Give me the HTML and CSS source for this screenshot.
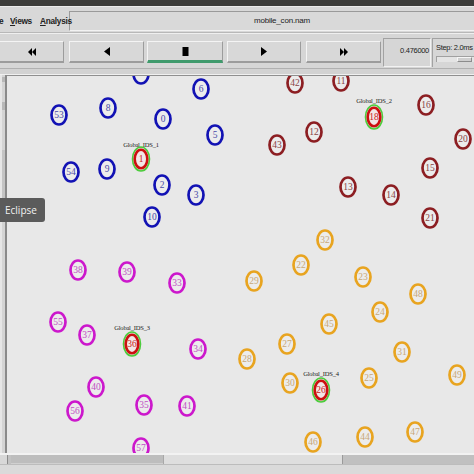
FILE: index.html
```html
<!DOCTYPE html>
<html>
<head>
<meta charset="utf-8">
<link rel="stylesheet" href="styles.css">
</head>
<body>
<div class="app">
  <div class="titlebar"></div>
  <div class="menubar">
    <div class="menus">
      <span class="menu">e</span>
      <span class="menu"><u>V</u>iews</span>
      <span class="menu"><u>A</u>nalysis</span>
    </div>
    <div class="filefield">mobile_con.nam</div>
  </div>
  <div class="toolbar">
    <div class="btn b1"><svg width="10" height="8" viewBox="0 0 10 8"><polygon points="5,0 5,8 1,4" fill="#000"/><polygon points="9,0 9,8 5,4" fill="#000"/></svg></div>
    <div class="btn b2"><svg width="8" height="9" viewBox="0 0 8 9"><polygon points="7,0 7,9 1,4.5" fill="#000"/></svg></div>
    <div class="btn b3 active"><svg width="7" height="9" viewBox="0 0 7 9"><rect x="0.5" y="0" width="6" height="9" fill="#000"/></svg></div>
    <div class="btn b4"><svg width="8" height="9" viewBox="0 0 8 9"><polygon points="1,0 1,9 7,4.5" fill="#000"/></svg></div>
    <div class="btn b5"><svg width="10" height="8" viewBox="0 0 10 8"><polygon points="1,0 1,8 5,4" fill="#000"/><polygon points="5,0 5,8 9,4" fill="#000"/></svg></div>
    <div class="timebox">0.476000</div>
    <div class="stepbox">
      <div class="steplabel">Step: 2.0ms</div>
      <div class="slider"><div class="thumb"></div></div>
    </div>
  </div>
  <div class="sep"></div>
  <div class="main">
    <div class="leftstrip">
      <div class="ls-knob k1"></div>
      <div class="ls-knob k2"></div>
      <div class="ls-bar"></div>
    </div>
    <div class="canvas">
      <svg class="net" width="466" height="378" viewBox="8 75 466 378">
        <g class="blue">
          <ellipse cx="142" cy="73" rx="7.5" ry="9.5"/>
          <ellipse cx="60" cy="114" rx="7.5" ry="9.5"/><text x="60" y="114">53</text>
          <ellipse cx="109" cy="107" rx="7.5" ry="9.5"/><text x="109" y="107">8</text>
          <ellipse cx="164" cy="118" rx="7.5" ry="9.5"/><text x="164" y="118">0</text>
          <ellipse cx="202" cy="88" rx="7.5" ry="9.5"/><text x="202" y="88">6</text>
          <ellipse cx="216" cy="134" rx="7.5" ry="9.5"/><text x="216" y="134">5</text>
          <ellipse cx="108" cy="168" rx="7.5" ry="9.5"/><text x="108" y="168">9</text>
          <ellipse cx="72" cy="171" rx="7.5" ry="9.5"/><text x="72" y="171">54</text>
          <ellipse cx="163" cy="184" rx="7.5" ry="9.5"/><text x="163" y="184">2</text>
          <ellipse cx="197" cy="194" rx="7.5" ry="9.5"/><text x="197" y="194">3</text>
          <ellipse cx="153" cy="216" rx="7.5" ry="9.5"/><text x="153" y="216">10</text>
        </g>
        <g class="red">
          <ellipse cx="296" cy="82" rx="7.5" ry="9.5"/><text x="296" y="82">42</text>
          <ellipse cx="342" cy="80" rx="7.5" ry="9.5"/><text x="342" y="80">11</text>
          <ellipse cx="315" cy="131" rx="7.5" ry="9.5"/><text x="315" y="131">12</text>
          <ellipse cx="278" cy="144" rx="7.5" ry="9.5"/><text x="278" y="144">43</text>
          <ellipse cx="427" cy="104" rx="7.5" ry="9.5"/><text x="427" y="104">16</text>
          <ellipse cx="464" cy="138" rx="7.5" ry="9.5"/><text x="464" y="138">20</text>
          <ellipse cx="431" cy="167" rx="7.5" ry="9.5"/><text x="431" y="167">15</text>
          <ellipse cx="349" cy="186" rx="7.5" ry="9.5"/><text x="349" y="186">13</text>
          <ellipse cx="392" cy="194" rx="7.5" ry="9.5"/><text x="392" y="194">14</text>
          <ellipse cx="431" cy="217" rx="7.5" ry="9.5"/><text x="431" y="217">21</text>
        </g>
        <g class="mag">
          <ellipse cx="79" cy="269" rx="7.5" ry="9.5"/><text x="79" y="269">38</text>
          <ellipse cx="128" cy="271" rx="7.5" ry="9.5"/><text x="128" y="271">39</text>
          <ellipse cx="178" cy="282" rx="7.5" ry="9.5"/><text x="178" y="282">33</text>
          <ellipse cx="59" cy="321" rx="7.5" ry="9.5"/><text x="59" y="321">55</text>
          <ellipse cx="88" cy="334" rx="7.5" ry="9.5"/><text x="88" y="334">37</text>
          <ellipse cx="199" cy="348" rx="7.5" ry="9.5"/><text x="199" y="348">34</text>
          <ellipse cx="97" cy="386" rx="7.5" ry="9.5"/><text x="97" y="386">40</text>
          <ellipse cx="76" cy="410" rx="7.5" ry="9.5"/><text x="76" y="410">56</text>
          <ellipse cx="145" cy="404" rx="7.5" ry="9.5"/><text x="145" y="404">35</text>
          <ellipse cx="188" cy="405" rx="7.5" ry="9.5"/><text x="188" y="405">41</text>
          <ellipse cx="142" cy="447" rx="7.5" ry="9.5"/><text x="142" y="447">57</text>
        </g>
        <g class="orange">
          <ellipse cx="326" cy="239" rx="7.5" ry="9.5"/><text x="326" y="239">32</text>
          <ellipse cx="302" cy="264" rx="7.5" ry="9.5"/><text x="302" y="264">22</text>
          <ellipse cx="255" cy="280" rx="7.5" ry="9.5"/><text x="255" y="280">29</text>
          <ellipse cx="364" cy="276" rx="7.5" ry="9.5"/><text x="364" y="276">23</text>
          <ellipse cx="419" cy="293" rx="7.5" ry="9.5"/><text x="419" y="293">48</text>
          <ellipse cx="381" cy="311" rx="7.5" ry="9.5"/><text x="381" y="311">24</text>
          <ellipse cx="330" cy="323" rx="7.5" ry="9.5"/><text x="330" y="323">45</text>
          <ellipse cx="288" cy="343" rx="7.5" ry="9.5"/><text x="288" y="343">27</text>
          <ellipse cx="248" cy="358" rx="7.5" ry="9.5"/><text x="248" y="358">28</text>
          <ellipse cx="403" cy="351" rx="7.5" ry="9.5"/><text x="403" y="351">31</text>
          <ellipse cx="291" cy="382" rx="7.5" ry="9.5"/><text x="291" y="382">30</text>
          <ellipse cx="370" cy="377" rx="7.5" ry="9.5"/><text x="370" y="377">25</text>
          <ellipse cx="458" cy="374" rx="7.5" ry="9.5"/><text x="458" y="374">49</text>
          <ellipse cx="314" cy="441" rx="7.5" ry="9.5"/><text x="314" y="441">46</text>
          <ellipse cx="366" cy="436" rx="7.5" ry="9.5"/><text x="366" y="436">44</text>
          <ellipse cx="416" cy="431" rx="7.5" ry="9.5"/><text x="416" y="431">47</text>
        </g>
        <g class="special">
          <text class="lbl" x="142" y="143">Global_IDS_1</text>
          <ellipse class="halo" cx="142" cy="158" rx="8.5" ry="12"/><ellipse class="core" cx="142" cy="158" rx="6.3" ry="9.3"/><text x="142" y="158">1</text>
          <text class="lbl" x="375" y="99">Global_IDS_2</text>
          <ellipse class="halo" cx="375" cy="116" rx="8.5" ry="12"/><ellipse class="core" cx="375" cy="116" rx="6.3" ry="9.3"/><text x="375" y="116">18</text>
          <text class="lbl" x="133" y="326">Global_IDS_3</text>
          <ellipse class="halo" cx="133" cy="343" rx="8.5" ry="12"/><ellipse class="core" cx="133" cy="343" rx="6.3" ry="9.3"/><text x="133" y="343">36</text>
          <text class="lbl" x="322" y="372">Global_IDS_4</text>
          <ellipse class="halo" cx="322" cy="389" rx="8.5" ry="12"/><ellipse class="core" cx="322" cy="389" rx="6.3" ry="9.3"/><text x="322" y="389">26</text>
        </g>
      </svg>
    </div>
    <div class="tooltip">Eclipse</div>
  </div>
  <div class="hscroll">
    <div class="arrow"></div>
    <div class="track-a"></div>
    <div class="track-thumb"></div>
    <div class="track-b"></div>
  </div>
  <div class="footer"></div>
</div>
</body>
</html>
```

FILE: styles.css
```css
* { box-sizing: border-box; }
html, body { margin: 0; padding: 0; }
body {
  width: 474px;
  height: 474px;
  overflow: hidden;
  background: #d6d6d6;
  font-family: "Liberation Sans", Arial, sans-serif;
}
.app {
  display: flex;
  flex-direction: column;
  width: 474px;
  height: 474px;
}
.titlebar {
  height: 6px;
  background: #3d3d3b;
  flex: none;
}
.menubar {
  height: 27px;
  flex: none;
  display: flex;
  align-items: center;
  background: #d8d8d8;
  border-top: 1px solid #ececec;
  border-bottom: 1px solid #b8b8b8;
  padding-top: 3px;
}
.menus {
  display: flex;
  gap: 6px;
  width: 70px;
  margin-left: -1px;
}
.menu {
  font-size: 9px;
  font-weight: bold;
  color: #222;
  letter-spacing: -0.3px;
  transform: scaleX(0.92);
  transform-origin: left center;
}
.menu u { text-decoration: underline; }
.filefield {
  flex: 1;
  height: 20px;
  border-top: 1px solid #9a9a9a;
  border-left: 1px solid #9a9a9a;
  border-bottom: 1px solid #f2f2f2;
  background: #d9d9d9;
  font-size: 8px;
  color: #222;
  line-height: 18px;
  padding-left: 184px;
  letter-spacing: -0.2px;
}
.toolbar {
  height: 35px;
  flex: none;
  display: flex;
  align-items: stretch;
  background: #d6d6d6;
  border-top: 1px solid #efefef;
  padding-top: 4px;
}
.btn {
  height: 22px;
  margin-top: 3px;
  background: #d8d8d8;
  border-top: 1px solid #f4f4f4;
  border-left: 1px solid #f4f4f4;
  border-right: 1px solid #9c9c9c;
  border-bottom: 2px solid #9c9c9c;
  display: flex;
  align-items: center;
  justify-content: center;
}
.btn svg { display: block; }
.b1 { width: 65px; margin-right: 5px; margin-left: -1px; }
.b2 { width: 75px; margin-right: 3px; }
.b3 { width: 76px; margin-right: 4px; }
.b4 { width: 74px; margin-right: 5px; }
.b5 { width: 75px; margin-right: 2px; }
.active { border-bottom: 3px solid #3f9a6c; }
.timebox {
  width: 48px;
  height: 29px;
  border-top: 1px solid #a2a2a2;
  border-left: 1px solid #a2a2a2;
  border-bottom: 1px solid #f2f2f2;
  border-right: 1px solid #f2f2f2;
  font-size: 7.5px;
  color: #222;
  text-align: right;
  padding-right: 1px;
  line-height: 24px;
  letter-spacing: -0.3px;
}
.stepbox {
  flex: 1;
  height: 29px;
  margin-left: 1px;
  border-top: 1px solid #a2a2a2;
  border-left: 1px solid #a2a2a2;
  display: flex;
  flex-direction: column;
  padding: 4px 0 0 3px;
}
.steplabel {
  font-size: 7.5px;
  color: #222;
  letter-spacing: -0.3px;
  white-space: nowrap;
}
.slider {
  margin-top: 4px;
  height: 6px;
  background: #e4e4e4;
  border-top: 1px solid #a0a0a0;
  border-left: 1px solid #a0a0a0;
  display: flex;
  justify-content: flex-end;
  padding-right: 2px;
}
.thumb {
  width: 15px;
  height: 5px;
  background: #cfcfcf;
  border: 1px solid #8c8c8c;
  border-top-color: #f6f6f6;
  border-left-color: #f6f6f6;
}
.sep {
  height: 7px;
  flex: none;
  background: #d2d2d2;
  border-top: 1px solid #b0b0b0;
  border-bottom: 1px solid #f0f0f0;
}
.main {
  height: 378px;
  flex: none;
  display: flex;
  position: relative;
}
.leftstrip {
  width: 7px;
  flex: none;
  background: #d4d4d4;
  border-left: 2px solid #e6e6e6;
  border-right: 2px solid #8a8a8a;
}
.ls-knob {
  height: 5px;
  background: #b8b8b8;
  margin-top: 2px;
}
.k2 { margin-top: 20px; height: 8px; }
.ls-bar {
  margin-top: 40px;
  height: 70px;
  background: #c4c4c4;
}
.canvas {
  flex: 1;
  background: #e8e8e8;
  border-top: 1px solid #8f8f8f;
  overflow: hidden;
}
.net { display: block; }
.net ellipse { fill: #ececec; stroke-width: 2.7; }
.net text {
  font-family: "Liberation Serif", "Times New Roman", serif;
  font-size: 9.5px;
  text-anchor: middle;
  dominant-baseline: central;
}
.blue ellipse { stroke: #1212b4; }
.blue text { fill: #4a4aa8; }
.red ellipse { stroke: #8c1e22; }
.red text { fill: #8a4446; }
.mag ellipse { stroke: #cc18cc; }
.mag text { fill: #c050c4; }
.orange ellipse { stroke: #e8a420; }
.orange text { fill: #c8a878; }
.special .halo { fill: none; stroke: #4ccc3c; stroke-width: 1.6; }
.special .core { fill: #f2e6e6; stroke: #cc1010; stroke-width: 2.6; }
.special text { fill: #cc2020; }
.special text.lbl {
  fill: #222;
  font-size: 6.5px;
  letter-spacing: -0.2px;
}
.tooltip {
  position: absolute;
  left: 0;
  top: 123px;
  width: 45px;
  height: 24px;
  background: #5b5b5b;
  color: #f2f2f2;
  font-size: 10px;
  line-height: 24px;
  padding-left: 5px;
  border-radius: 0 3px 3px 0;
  font-family: "Open Sans", "Liberation Sans", sans-serif;
}
.hscroll {
  height: 11px;
  flex: none;
  display: flex;
  align-items: stretch;
  background: #d8d8d8;
  border-top: 2px solid #f2f2f2;
  padding-left: 7px;
}
.arrow {
  width: 4px;
  background: #c2c2c2;
  border-left: 1px solid #8a8a8a;
}
.track-a { width: 152px; background: #bdbdbd; border-bottom: 1px solid #d0d0d0; }
.track-thumb { width: 179px; background: #dedede; border-left: 1px solid #a8a8a8; }
.track-b { flex: 1; background: #c0c0c0; border-left: 1px solid #9a9a9a; }
.footer {
  height: 10px;
  flex: none;
  background: #dadada;
  border-top: 1px solid #bcbcbc;
}
```
